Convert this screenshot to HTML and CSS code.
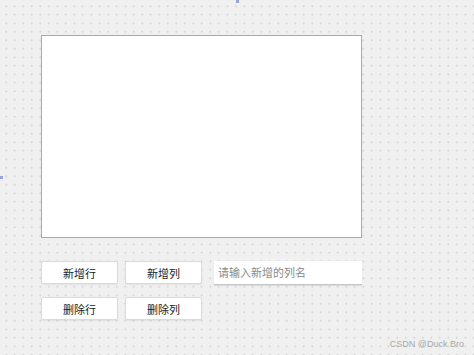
FILE: index.html
```html
<!DOCTYPE html>
<html lang="zh-CN">
<head>
  <meta charset="UTF-8">
  <title>表格编辑</title>
  <link rel="stylesheet" href="styles.css">
</head>
<body>
  <span class="handle handle-top"></span>
  <span class="handle handle-left"></span>

  <!-- 窗体 -->
  <div class="form">
    <div class="tabela"></div>

    <div class="linha">
      <button class="btn">新增行</button>
      <button class="btn">新增列</button>
      <input type="text" class="campo" placeholder="请输入新增的列名">
    </div>

    <div class="linha">
      <button class="btn">删除行</button>
      <button class="btn">删除列</button>
    </div>
  </div>

  <p class="marca">CSDN @Duck Bro</p>
</body>
</html>
```

FILE: styles.css
```css
* {
  box-sizing: border-box;
  margin: 0;
  padding: 0;
}

body {
  width: 474px;
  height: 355px;
  overflow: hidden;
  position: relative;
  font-family: "Noto Sans CJK SC", "Noto Sans", sans-serif;
  background-color: #f0f0f0;
  background-image: radial-gradient(circle, #cfcfcf 0.8px, transparent 1.1px);
  background-size: 8.5px 8.5px;
  background-position: 2px 2px;
}

.form {
  padding: 35px 0 0 41px;
  display: flex;
  flex-direction: column;
}

.tabela {
  width: 321px;
  height: 203px;
  background: #fff;
  border: 1px solid #a9a9a9;
}

.linha {
  display: flex;
  align-items: center;
  gap: 7px;
  margin-top: 23px;
  height: 23px;
}

.linha + .linha {
  margin-top: 13px;
}

.btn {
  width: 77px;
  height: 23px;
  background: #fff;
  border: 1px solid #dadada;
  border-radius: 2px;
  font-family: inherit;
  font-size: 11px;
  color: #222;
  box-shadow: 0 1px 1px rgba(0, 0, 0, 0.05);
}

.campo {
  width: 148px;
  height: 24px;
  margin-left: 5px;
  background: #fff;
  border: none;
  border-bottom: 1px solid #c4c4c4;
  padding: 0 4px;
  font-family: inherit;
  font-size: 11px;
  box-shadow: 0 1px 1px rgba(0, 0, 0, 0.08);
}

.campo::placeholder {
  color: #8a8a8a;
}

.marca {
  position: absolute;
  right: 10px;
  bottom: 6px;
  font-family: "Liberation Sans Narrow", "Liberation Sans", sans-serif;
  font-size: 9px;
  color: #a8a8a8;
}

.handle {
  position: absolute;
  width: 3px;
  height: 3px;
  background: #9aa3e0;
}

.handle-top {
  left: 236px;
  top: 0;
}

.handle-left {
  left: 0;
  top: 176px;
}
```
